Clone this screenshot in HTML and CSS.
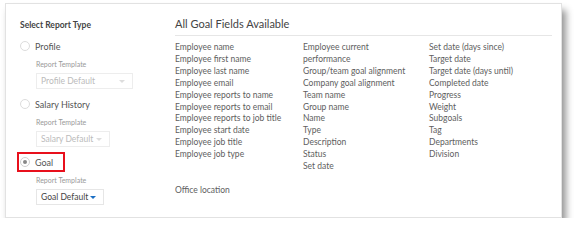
FILE: index.html
```html
<!DOCTYPE html>
<html lang="en">
<head>
    <meta charset="UTF-8">
    <meta name="viewport" content="width=device-width, initial-scale=1.0">
    <title>Export Report - Goal</title>
    <link rel="stylesheet" href="styles.css">
</head>
<body>
    <div class="card">
        <div class="report-types">
            <h4 class="pane-title">Select Report Type</h4>

            <div class="option">
                <div class="radio-row">
                    <span class="radio"></span>
                    <span class="radio-label">Profile</span>
                </div>
                <div class="template-label">Report Template</div>
                <div class="select disabled" style="width: 97px;">
                    <span>Profile Default</span>
                    <span class="caret"></span>
                </div>
            </div>

            <div class="option">
                <div class="radio-row">
                    <span class="radio"></span>
                    <span class="radio-label">Salary History</span>
                </div>
                <div class="template-label">Report Template</div>
                <div class="select disabled" style="width: 74px;">
                    <span>Salary Default</span>
                    <span class="caret"></span>
                </div>
            </div>

            <div class="option">
                <div class="radio-row selected">
                    <span class="radio checked"></span>
                    <span class="radio-label">Goal</span>
                    <span class="highlight"></span>
                </div>
                <div class="template-label">Report Template</div>
                <div class="select" style="width: 68px;">
                    <span>Goal Default</span>
                    <span class="caret"></span>
                </div>
            </div>
        </div>

        <div class="fields">
            <h3 class="fields-title">All Goal Fields Available</h3>
            <div class="field-columns">
                <ul class="col col1">
                    <li>Employee name</li>
                    <li>Employee first name</li>
                    <li>Employee last name</li>
                    <li>Employee email</li>
                    <li>Employee reports to name</li>
                    <li>Employee reports to email</li>
                    <li>Employee reports to job title</li>
                    <li>Employee start date</li>
                    <li>Employee job title</li>
                    <li>Employee job type</li>
                </ul>
                <ul class="col col2">
                    <li>Employee current performance</li>
                    <li>Group/team goal alignment</li>
                    <li>Company goal alignment</li>
                    <li>Team name</li>
                    <li>Group name</li>
                    <li>Name</li>
                    <li>Type</li>
                    <li>Description</li>
                    <li>Status</li>
                    <li>Set date</li>
                </ul>
                <ul class="col col3">
                    <li>Set date (days since)</li>
                    <li>Target date</li>
                    <li>Target date (days until)</li>
                    <li>Completed date</li>
                    <li>Progress</li>
                    <li>Weight</li>
                    <li>Subgoals</li>
                    <li>Tag</li>
                    <li>Departments</li>
                    <li>Division</li>
                </ul>
            </div>
            <ul class="col extra">
                <li>Office location</li>
            </ul>
        </div>
    </div>
</body>
</html>
```

FILE: styles.css
```css
body {
    margin: 0;
    background-color: #fff;
    font-family: Lato, "Open Sans", sans-serif;
    color: #555;
}

.card {
    display: flex;
    box-sizing: border-box;
    width: 557px;
    height: 215px;
    margin: 3px 0 0 5px;
    background-color: #fff;
    border: 1px solid #e2e2e2;
    box-shadow: 4px 7px 7px rgba(0, 0, 0, 0.42);
}

/* left pane */
.report-types {
    width: 155px;
    padding: 15px 0 0 14px;
    box-sizing: border-box;
}

.pane-title {
    margin: 0 0 9px 0;
    font-size: 8.5px;
    line-height: 12px;
    font-weight: bold;
    color: #444;
}

.option {
    margin-bottom: 9px;
}

.radio-row {
    position: relative;
    display: flex;
    align-items: center;
    height: 12px;
}

.radio {
    box-sizing: border-box;
    width: 10px;
    height: 10px;
    border: 1px solid #dcdcdc;
    border-radius: 50%;
    margin-right: 5px;
    display: flex;
    align-items: center;
    justify-content: center;
}

.radio.checked {
    border-color: #d0d0d0;
}

.radio.checked::after {
    content: "";
    width: 4px;
    height: 4px;
    border-radius: 50%;
    background-color: #888;
}

.radio-label {
    font-size: 9px;
    color: #555;
}

/* red annotation box round the chosen option */
.highlight {
    position: absolute;
    left: -3px;
    top: -4px;
    width: 48px;
    height: 20px;
    box-sizing: border-box;
    border: 2px solid #e8101c;
}

.template-label {
    margin: 6px 0 3px 16px;
    font-size: 7px;
    line-height: 12px;
    color: #999;
}

.select {
    box-sizing: border-box;
    height: 16px;
    margin-left: 16px;
    padding: 0 7px 0 4px;
    border: 1px solid #e6e6e6;
    display: flex;
    align-items: center;
    justify-content: space-between;
    font-size: 8.5px;
    color: #444;
}

.select.disabled {
    color: #bbb;
    border-color: #ededed;
}

.caret {
    width: 0;
    height: 0;
    border-left: 3.5px solid transparent;
    border-right: 3.5px solid transparent;
    border-top: 3.5px solid #1b6fc4;
}

.select.disabled .caret {
    border-top-color: #ddd;
}

/* right pane */
.fields {
    flex: 1;
    padding: 13px 9px 0 14px;
}

.fields-title {
    margin: 0;
    padding-bottom: 4px;
    font-size: 11px;
    line-height: 14px;
    font-weight: normal;
    color: #444;
    border-bottom: 1px solid #e6e6e6;
}

.field-columns {
    display: flex;
    margin-top: 6px;
}

.col {
    list-style: none;
    margin: 0;
    padding: 0;
    font-size: 8.5px;
    line-height: 11.9px;
    color: #5e5e5e;
}

.col1 {
    width: 128px;
}

.col2 {
    width: 111px;
    margin-right: 15px;
}

.extra {
    margin-top: 11.9px;
}
```
